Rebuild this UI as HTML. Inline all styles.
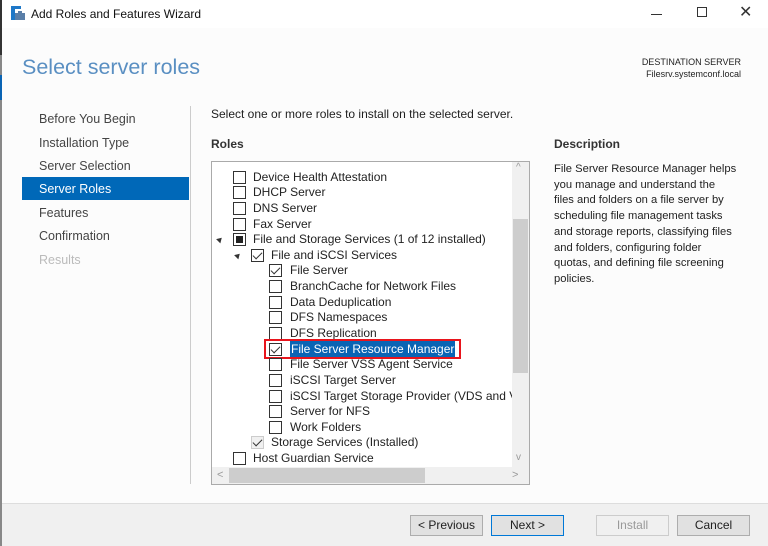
<!DOCTYPE html>
<html><head><style>
*{margin:0;padding:0;box-sizing:border-box}
body{width:768px;height:546px;overflow:hidden;background:#fff;font-family:"Liberation Sans",sans-serif;position:relative;color:#1e1e1e}
.a{position:absolute;white-space:nowrap}
.t{font-size:12px}
.nav{font-size:12.5px;color:#444;left:39px}
.cb{position:absolute;width:13px;height:13px;border:1px solid #333;background:#fff}
.row{position:absolute;font-size:12px;color:#222;white-space:nowrap;height:16px;line-height:16px}
.btn{position:absolute;top:515px;height:21px;border:1px solid #adadad;background:#e1e1e1;font-size:12px;text-align:center;line-height:19px}
.chk::after{content:"";position:absolute;left:3px;top:0px;width:4px;height:8px;border:solid #333;border-width:0 1.5px 1.5px 0;transform:rotate(45deg)}
.tri{position:absolute;width:0;height:0;border-left:3px solid transparent;border-bottom:5px solid #333;border-right:3px solid transparent}
</style></head><body>
<div class="a" style="left:0;top:0;width:2px;height:55px;background:#333"></div>
<div class="a" style="left:0;top:55px;width:2px;height:491px;background:#888"></div>
<div class="a" style="left:0;top:75px;width:2px;height:25px;background:#0a64b4"></div>
<div class="a" style="left:2px;top:28px;width:766px;height:476px;background:#fcfcfc"></div>
<svg class="a" style="left:10px;top:5px" width="16" height="16"><rect x="1" y="1" width="4" height="14" fill="#1e78c8"/><rect x="1" y="1" width="10" height="3" fill="#1e78c8"/><rect x="5" y="8" width="10" height="7" fill="#5a7fa8"/><rect x="8" y="6" width="4" height="2" fill="#5a7fa8"/></svg>
<div class="a" style="left:31px;top:7px;font-size:12px;color:#111">Add Roles and Features Wizard</div>
<div class="a" style="left:651px;top:14px;width:11px;height:1px;background:#333"></div>
<div class="a" style="left:697px;top:7px;width:10px;height:10px;border:1px solid #333"></div>
<div class="a" style="left:739px;top:2px;font-size:16px;color:#333">✕</div>
<div class="a" style="left:22px;top:55px;font-size:21.5px;color:#5a8fc2;font-weight:300">Select server roles</div>
<div class="a" style="right:27px;top:56px;font-size:9px;color:#222;text-align:right;line-height:12px">DESTINATION SERVER<br>Filesrv.systemconf.local</div>
<div class="a nav" style="top:112px">Before You Begin</div>
<div class="a nav" style="top:136px">Installation Type</div>
<div class="a nav" style="top:159px">Server Selection</div>
<div class="a" style="left:22px;top:177px;width:167px;height:23px;background:#0068b8"></div>
<div class="a nav" style="top:182px;color:#fff">Server Roles</div>
<div class="a nav" style="top:206px">Features</div>
<div class="a nav" style="top:229px">Confirmation</div>
<div class="a nav" style="top:253px;color:#bbb">Results</div>
<div class="a" style="left:190px;top:106px;width:1px;height:378px;background:#ccc"></div>
<div class="a t" style="left:211px;top:107px">Select one or more roles to install on the selected server.</div>
<div class="a t" style="left:211px;top:137px;font-weight:bold;color:#333">Roles</div>
<div class="a t" style="left:554px;top:137px;font-weight:bold;color:#333">Description</div>
<div class="a" style="left:554px;top:162px;font-size:11.2px;line-height:15.7px;color:#222">File Server Resource Manager helps<br>you manage and understand the<br>files and folders on a file server by<br>scheduling file management tasks<br>and storage reports, classifying files<br>and folders, configuring folder<br>quotas, and defining file screening<br>policies.</div>
<div class="a" style="left:211px;top:161px;width:319px;height:324px;border:1px solid #aaa;background:#fff;overflow:hidden">
 <div class="row" style="left:41px;top:7px">Device Health Attestation</div>
 <div class="cb" style="left:21px;top:9px"></div>
 <div class="cb" style="left:21px;top:24px"></div><div class="row" style="left:41px;top:22px">DHCP Server</div>
 <div class="cb" style="left:21px;top:40px"></div><div class="row" style="left:41px;top:38px">DNS Server</div>
 <div class="cb" style="left:21px;top:56px"></div><div class="row" style="left:41px;top:54px">Fax Server</div>
 <div class="tri" style="left:5px;top:75px;transform:rotate(45deg)"></div>
 <div class="cb" style="left:21px;top:71px"><div style="position:absolute;left:2px;top:2px;width:7px;height:7px;background:#222"></div></div><div class="row" style="left:41px;top:69px">File and Storage Services (1 of 12 installed)</div>
 <div class="tri" style="left:23px;top:91px;transform:rotate(45deg)"></div>
 <div class="cb chk" style="left:39px;top:87px"></div><div class="row" style="left:59px;top:85px">File and iSCSI Services</div>
 <div class="cb chk" style="left:57px;top:102px"></div><div class="row" style="left:78px;top:100px">File Server</div>
 <div class="cb" style="left:57px;top:118px"></div><div class="row" style="left:78px;top:116px">BranchCache for Network Files</div>
 <div class="cb" style="left:57px;top:134px"></div><div class="row" style="left:78px;top:132px">Data Deduplication</div>
 <div class="cb" style="left:57px;top:149px"></div><div class="row" style="left:78px;top:147px">DFS Namespaces</div>
 <div class="cb" style="left:57px;top:165px"></div><div class="row" style="left:78px;top:163px">DFS Replication</div>
 <div class="a" style="left:52px;top:177px;width:197px;height:20px;border:2px solid #e8141c;background:#fff"></div>
 <div class="cb chk" style="left:57px;top:181px"></div><div class="row" style="left:78px;top:179px;background:#0a64b4;color:#fff;padding:0 1px">File Server Resource Manager</div>
 <div class="cb" style="left:57px;top:196px"></div><div class="row" style="left:78px;top:194px">File Server VSS Agent Service</div>
 <div class="cb" style="left:57px;top:212px"></div><div class="row" style="left:78px;top:210px">iSCSI Target Server</div>
 <div class="cb" style="left:57px;top:228px"></div><div class="row" style="left:78px;top:226px">iSCSI Target Storage Provider (VDS and VSS</div>
 <div class="cb" style="left:57px;top:243px"></div><div class="row" style="left:78px;top:241px">Server for NFS</div>
 <div class="cb" style="left:57px;top:259px"></div><div class="row" style="left:78px;top:257px">Work Folders</div>
 <div class="cb chk" style="left:39px;top:274px;border-color:#ccc;background:#f0f0f0"></div><div class="row" style="left:59px;top:272px">Storage Services (Installed)</div>
 <div class="cb" style="left:21px;top:290px"></div><div class="row" style="left:41px;top:288px">Host Guardian Service</div>
 <div class="a" style="left:300px;top:0;width:17px;height:305px;background:#f0f0f0"></div>
 <div class="a" style="left:301px;top:57px;width:15px;height:154px;background:#cdcdcd"></div>
 <div class="a" style="left:0;top:305px;width:317px;height:17px;background:#f0f0f0"></div>
 <div class="a" style="left:17px;top:306px;width:196px;height:15px;background:#cdcdcd"></div>
 <div class="a" style="left:304px;top:0;font-size:10px;color:#999">^</div>
 <div class="a" style="left:304px;top:290px;font-size:10px;color:#999">v</div>
 <div class="a" style="left:5px;top:307px;font-size:11px;color:#999">&lt;</div>
 <div class="a" style="left:300px;top:307px;font-size:11px;color:#999">&gt;</div>
</div>
<div class="a" style="left:2px;top:503px;width:766px;height:43px;background:#f0f0f0;border-top:1px solid #ddd"></div>
<div class="btn" style="left:410px;width:73px">&lt; Previous</div>
<div class="btn" style="left:491px;width:73px;border-color:#0078d7">Next &gt;</div>
<div class="btn" style="left:596px;width:73px;background:#f0f0f0;border-color:#ccc;color:#999">Install</div>
<div class="btn" style="left:677px;width:73px">Cancel</div>
</body></html>
